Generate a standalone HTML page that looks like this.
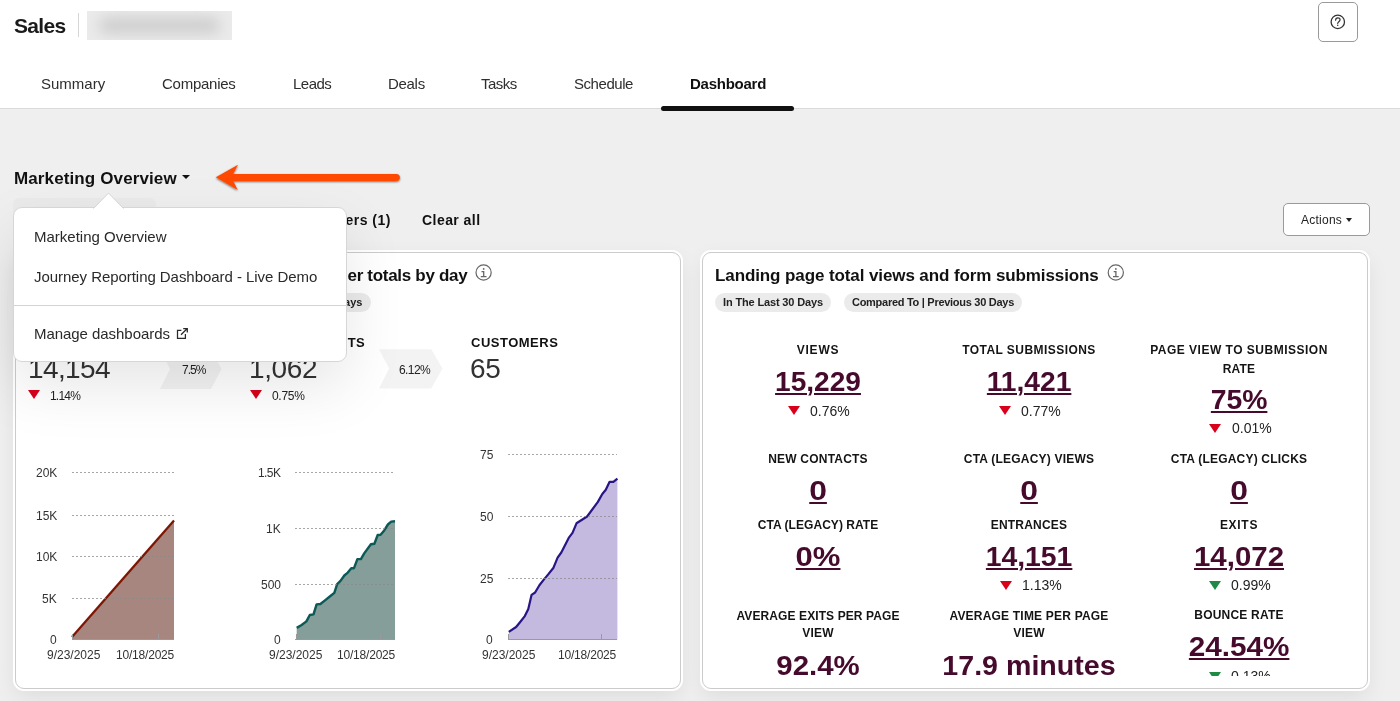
<!DOCTYPE html>
<html><head><meta charset="utf-8">
<style>
html,body{margin:0;padding:0;}
body{width:1400px;height:701px;overflow:hidden;position:relative;background:#efefef;font-family:"Liberation Sans",sans-serif;color:#222;}
.a{position:absolute;}
.t{position:absolute;line-height:1;white-space:nowrap;will-change:transform;}
.b{font-weight:700;}
.c{position:absolute;line-height:1;white-space:nowrap;transform:translateX(-50%);will-change:transform;}
#hdr{position:absolute;left:0;top:0;width:1400px;height:108px;background:#fff;border-bottom:1px solid #dadada;}
.tab{font-size:15px;top:76.1px;color:#2e2e2e;}
.card{position:absolute;top:252px;height:435px;background:#fff;border:1px solid #cbcbcb;border-radius:9px;box-shadow:0 0 0 2px #fff,0 8px 22px rgba(0,0,0,0.08);overflow:hidden;}
.pill{position:absolute;height:19px;border-radius:10px;background:#ebebeb;}
.pt{font-size:11px;font-weight:700;color:#222;}
.lbl{font-size:12px;font-weight:700;color:#141414;letter-spacing:0.2px;}
.val{font-size:27px;font-weight:700;color:#450a2c;text-decoration:underline;text-decoration-thickness:2.4px;text-underline-offset:2px;}
.dl{font-size:14px;color:#222;}
.tri{position:absolute;width:0;height:0;margin-left:-0.3px;margin-top:-0.5px;border-left:6.9px solid transparent;border-right:6.9px solid transparent;border-top:9.9px solid #d9001b;}
.trig{border-top-color:#1e8a43;}
.ax{font-size:12px;color:#333;}
</style></head><body>

<!-- HEADER -->
<div id="hdr"></div>
<div class="t b" style="left:13.5px;top:15.15px;font-size:21px;color:#1a1a1a;letter-spacing:-0.7px;">Sales</div>
<div class="a" style="left:78px;top:13px;width:1px;height:24px;background:#d6d6d6;"></div>
<div class="a" style="left:87px;top:11px;width:145px;height:29px;background:#ebebeb;overflow:hidden;">
  <div class="a" style="left:12px;top:6px;width:121px;height:17px;background:#cecece;filter:blur(7px);border-radius:8px;"></div>
</div>
<div class="a" style="left:1318px;top:2px;width:38px;height:38px;border:1px solid #9a9a9a;border-radius:5px;background:#fff;"></div>
<svg class="a" style="left:1328px;top:12px" width="20" height="20" viewBox="0 0 20 20">
  <circle cx="9.8" cy="9.9" r="6.7" fill="none" stroke="#333" stroke-width="1.3"/>
  <path d="M7.6 8.2 C7.6 6.6 8.7 5.8 9.9 5.8 C11.1 5.8 12.1 6.6 12.1 7.8 C12.1 9.2 10.1 9.6 9.7 11.4" fill="none" stroke="#333" stroke-width="1.2" stroke-linecap="round"/>
  <circle cx="9.7" cy="13.3" r="0.75" fill="#333"/>
</svg>

<div class="t tab" style="left:41px;">Summary</div>
<div class="t tab" style="left:161.6px;letter-spacing:-0.25px;">Companies</div>
<div class="t tab" style="left:292.5px;letter-spacing:-0.5px;">Leads</div>
<div class="t tab" style="left:388px;letter-spacing:-0.3px;">Deals</div>
<div class="t tab" style="left:481px;letter-spacing:-0.5px;">Tasks</div>
<div class="t tab" style="left:574px;letter-spacing:-0.45px;">Schedule</div>
<div class="t tab b" style="left:690px;letter-spacing:-0.25px;color:#111;">Dashboard</div>
<div class="a" style="left:661px;top:106px;width:133px;height:5px;border-radius:3px;background:#111;"></div>

<!-- TOOLBAR -->
<div class="t b" style="left:14px;top:169.6px;font-size:17px;letter-spacing:0.12px;color:#111;">Marketing Overview</div>
<div class="a" style="left:181.5px;top:174.7px;width:0;height:0;border-left:4.8px solid transparent;border-right:4.8px solid transparent;border-top:4.8px solid #111;"></div>

<!-- orange arrow -->
<svg class="a" style="left:205px;top:155px" width="210" height="45" viewBox="0 0 210 45">
  <defs><filter id="sh" x="-10%" y="-50%" width="120%" height="200%"><feGaussianBlur in="SourceAlpha" stdDeviation="0.9"/><feOffset dx="0.4" dy="1.3"/><feComponentTransfer><feFuncA type="linear" slope="0.55"/></feComponentTransfer><feMerge><feMergeNode/><feMergeNode in="SourceGraphic"/></feMerge></filter></defs>
  <g filter="url(#sh)">
    <path d="M10.8 22.3 L33 9.8 L28.2 18.9 L191.3 18.9 A3.6 3.6 0 0 1 191.3 26.1 L28.2 26.1 L32.7 35.1 Z" fill="#ff4a00"/>
  </g>
</svg>

<!-- filter bar -->
<div class="a" style="left:13px;top:198px;width:143px;height:40px;background:#eaeaea;border-radius:6px;"></div>
<div class="t b" style="right:1009px;top:212.7px;font-size:14px;letter-spacing:0.5px;color:#111;">Advanced filters (1)</div>
<div class="t b" style="left:422.3px;top:212.7px;font-size:14px;letter-spacing:0.45px;color:#111;">Clear all</div>
<div class="a" style="left:1283px;top:203px;width:85px;height:31px;border:1px solid #9a9a9a;border-radius:5px;background:#fff;"></div>
<div class="t" style="left:1300.5px;top:213.6px;font-size:12px;letter-spacing:0.25px;color:#222;">Actions</div>
<div class="a" style="left:1346px;top:218px;width:0;height:0;border-left:3.25px solid transparent;border-right:3.25px solid transparent;border-top:4px solid #222;"></div>

<!-- CARD 1 -->
<div class="card" style="left:15px;width:664px;"></div>
<div class="t b" style="right:933px;top:266.55px;font-size:17px;letter-spacing:-0.3px;color:#111;">Lifecycle stage customer totals by day</div>
<svg class="a" style="left:474px;top:263px" width="20" height="20" viewBox="0 0 20 20">
  <circle cx="9.6" cy="9.5" r="7.6" fill="none" stroke="#666" stroke-width="1.2"/>
  <rect x="8.9" y="5.1" width="1.5" height="1.7" fill="#666"/>
  <path d="M7.5 8.6 H9.7 V13.4 M6.8 13.6 H12.5" fill="none" stroke="#666" stroke-width="1.3"/>
</svg>
<div class="pill" style="left:200px;top:292.5px;width:171px;"></div>
<div class="t pt" style="right:1038px;top:296.95px;">Compared To | Previous 30 Days</div>

<div class="t b" style="right:1035px;top:335.95px;font-size:13px;letter-spacing:0.5px;color:#111;">CONTACTS</div>
<div class="t b" style="left:471.4px;top:335.95px;font-size:13px;letter-spacing:0.5px;color:#111;">CUSTOMERS</div>
<div class="t" style="left:28px;top:355.2px;font-size:28px;letter-spacing:-0.6px;color:#333;">14,154</div>
<div class="t" style="left:248.5px;top:355.2px;font-size:28px;letter-spacing:-0.4px;color:#333;">1,062</div>
<div class="t" style="left:470px;top:354.8px;font-size:28px;letter-spacing:-0.4px;color:#333;">65</div>
<svg class="a" style="left:160px;top:349px" width="62" height="40"><polygon points="0,0 51,0 61.5,20 51,40 0,40 10,20" fill="#f3f3f3"/></svg>
<svg class="a" style="left:379px;top:349px" width="64" height="40"><polygon points="0,0.3 52.2,0.3 63.5,19.6 52.2,39.6 0,39.6 10.2,19.6" fill="#f3f3f3"/></svg>
<div class="t" style="left:181.8px;top:364px;font-size:12px;letter-spacing:-1px;color:#222;">7.5%</div>
<div class="t" style="left:399px;top:364px;font-size:12px;letter-spacing:-0.6px;color:#222;">6.12%</div>
<div class="tri" style="left:28.6px;top:390.7px;"></div>
<div class="t" style="left:50.3px;top:389.8px;font-size:12px;letter-spacing:-0.8px;color:#222;">1.14%</div>
<div class="tri" style="left:249.8px;top:390.7px;"></div>
<div class="t" style="left:272px;top:389.8px;font-size:12px;letter-spacing:-0.3px;color:#222;">0.75%</div>

<!-- charts -->
<svg class="a" style="left:0;top:440px" width="680" height="240" viewBox="0 440 680 240">
  <!-- chart1 -->
  <path d="M72 637 L174 520.5 L174 639.5 L72 639.5 Z" fill="#a6867f"/>
  <path d="M72 637 L174 520.5" stroke="#7e1604" stroke-width="2.3" fill="none"/>
  <!-- chart2 -->
  <path d="M296.7,627.9 L301.6,625 L306.4,621.4 L309.8,615 L313.5,614.4 L316.6,604.4 L320.4,604 L324.7,600.6 L330.1,596.3 L334.3,592.9 L337.2,584.2 L340.5,580.9 L344.3,575.5 L347.8,572.6 L351.3,568.2 L354,568.2 L357.4,559.1 L360.9,559.1 L364.2,553.4 L370.9,544.3 L374.4,543.7 L377.7,535 L380.6,534.7 L384.4,530.2 L387.9,524.5 L391.2,521.6 L395,521.2 L395 639.5 L296.7 639.5 Z" fill="#869e9a"/>
  <path d="M296.7,627.9 L301.6,625 L306.4,621.4 L309.8,615 L313.5,614.4 L316.6,604.4 L320.4,604 L324.7,600.6 L330.1,596.3 L334.3,592.9 L337.2,584.2 L340.5,580.9 L344.3,575.5 L347.8,572.6 L351.3,568.2 L354,568.2 L357.4,559.1 L360.9,559.1 L364.2,553.4 L370.9,544.3 L374.4,543.7 L377.7,535 L380.6,534.7 L384.4,530.2 L387.9,524.5 L391.2,521.6 L395,521.2" stroke="#0b5a57" stroke-width="2.4" fill="none" stroke-linejoin="round"/>
  <!-- chart3 -->
  <path d="M508.8,631.9 L516.1,627 L520.4,621.7 L524.8,616.1 L528.3,608.9 L531.6,594.8 L535.1,592.5 L539.4,585.2 L543.8,579.6 L548.2,574.4 L553.5,567.7 L557.6,557.7 L561.3,552.5 L568.7,537.9 L572.5,532.9 L576.5,523.3 L587.1,516.5 L597.9,501.9 L602.3,494 L605.8,489.7 L609.6,481.8 L613.4,481.8 L617.4,478.6 L617.4 639.5 L508.8 639.5 Z" fill="#c4badf"/>
  <path d="M508.8,631.9 L516.1,627 L520.4,621.7 L524.8,616.1 L528.3,608.9 L531.6,594.8 L535.1,592.5 L539.4,585.2 L543.8,579.6 L548.2,574.4 L553.5,567.7 L557.6,557.7 L561.3,552.5 L568.7,537.9 L572.5,532.9 L576.5,523.3 L587.1,516.5 L597.9,501.9 L602.3,494 L605.8,489.7 L609.6,481.8 L613.4,481.8 L617.4,478.6" stroke="#2a1585" stroke-width="2.2" fill="none" stroke-linejoin="round"/>
  <g stroke="#8a8a8a" stroke-opacity="0.75" stroke-width="1" stroke-dasharray="2,2" fill="none">
    <line x1="72" y1="472.5" x2="174" y2="472.5"/><line x1="72" y1="515.5" x2="174" y2="515.5"/><line x1="72" y1="556.5" x2="174" y2="556.5"/><line x1="72" y1="598.5" x2="174" y2="598.5"/>
    <line x1="295" y1="472.5" x2="395" y2="472.5"/><line x1="295" y1="528.5" x2="395" y2="528.5"/><line x1="295" y1="584.5" x2="395" y2="584.5"/>
    <line x1="508" y1="454.5" x2="617" y2="454.5"/><line x1="508" y1="516.5" x2="617" y2="516.5"/><line x1="508" y1="578.5" x2="617" y2="578.5"/>
  </g>

  <!-- baselines & ticks -->
  <g stroke="#9a9a9a" stroke-width="1">
    <line x1="72" y1="639.5" x2="174" y2="639.5"/><line x1="72.5" y1="634" x2="72.5" y2="640"/><line x1="158.5" y1="634" x2="158.5" y2="640"/>
    <line x1="295" y1="639.5" x2="395" y2="639.5"/><line x1="296.5" y1="634" x2="296.5" y2="640"/><line x1="380.5" y1="634" x2="380.5" y2="640"/>
    <line x1="508" y1="639.5" x2="617" y2="639.5"/><line x1="508.5" y1="634" x2="508.5" y2="640"/><line x1="601.5" y1="634" x2="601.5" y2="640"/>
  </g>
</svg>
<div class="t ax" style="right:1343px;top:466.8px;">20K</div>
<div class="t ax" style="right:1343px;top:509.8px;">15K</div>
<div class="t ax" style="right:1343px;top:550.8px;">10K</div>
<div class="t ax" style="right:1343px;top:592.8px;">5K</div>
<div class="t ax" style="right:1343px;top:633.8px;">0</div>
<div class="t ax" style="left:46.9px;top:648.6px;">9/23/2025</div>
<div class="t ax" style="left:115.8px;top:648.6px;letter-spacing:-0.2px;">10/18/2025</div>

<div class="t ax" style="right:1120px;top:466.8px;letter-spacing:-0.6px;">1.5K</div>
<div class="t ax" style="right:1119px;top:522.8px;">1K</div>
<div class="t ax" style="right:1119px;top:578.8px;">500</div>
<div class="t ax" style="right:1119px;top:633.8px;">0</div>
<div class="t ax" style="left:269px;top:648.6px;">9/23/2025</div>
<div class="t ax" style="left:337px;top:648.6px;letter-spacing:-0.2px;">10/18/2025</div>

<div class="t ax" style="right:907px;top:448.8px;">75</div>
<div class="t ax" style="right:907px;top:510.8px;">50</div>
<div class="t ax" style="right:907px;top:572.8px;">25</div>
<div class="t ax" style="right:907px;top:633.8px;">0</div>
<div class="t ax" style="left:482px;top:648.6px;">9/23/2025</div>
<div class="t ax" style="left:558px;top:648.6px;letter-spacing:-0.2px;">10/18/2025</div>

<!-- CARD 2 -->
<div class="card" style="left:702px;width:664px;"></div>
<div class="t b" style="left:715.4px;top:266.55px;font-size:17px;letter-spacing:-0.1px;color:#111;">Landing page total views and form submissions</div>
<svg class="a" style="left:1106px;top:263px" width="20" height="20" viewBox="0 0 20 20">
  <circle cx="9.8" cy="9.5" r="7.6" fill="none" stroke="#666" stroke-width="1.2"/>
  <rect x="9.1" y="5.1" width="1.5" height="1.7" fill="#666"/>
  <path d="M7.7 8.6 H9.9 V13.4 M7.0 13.6 H12.7" fill="none" stroke="#666" stroke-width="1.3"/>
</svg>
<div class="pill" style="left:714.5px;top:292.8px;width:116.3px;"></div>
<div class="t pt" style="left:723px;top:296.95px;letter-spacing:-0.15px;">In The Last 30 Days</div>
<div class="pill" style="left:843.6px;top:292.8px;width:178.9px;"></div>
<div class="t pt" style="left:852px;top:296.95px;letter-spacing:-0.28px;">Compared To | Previous 30 Days</div>

<div id="kpis" class="a" style="left:703px;top:252px;width:664px;height:423.5px;overflow:hidden;">
<div class="a" style="left:-703px;top:-252px;width:1400px;height:701px;">
  <!-- row 1 -->
  <div class="c lbl" style="left:818px;top:344.4px;letter-spacing:0.8px;">VIEWS</div>
  <div class="c val" style="left:818px;top:368.85px;transform:translateX(-50%) scaleX(1.04);">15,229</div>
  <div class="tri" style="left:788px;top:406.6px;"></div><div class="t dl" style="left:809.8px;top:403.50px;">0.76%</div>

  <div class="c lbl" style="left:1028.6px;top:344.4px;letter-spacing:0.45px;">TOTAL SUBMISSIONS</div>
  <div class="c val" style="left:1028.6px;top:368.85px;transform:translateX(-50%) scaleX(1.045);">11,421</div>
  <div class="tri" style="left:999px;top:406.6px;"></div><div class="t dl" style="left:1020.5px;top:403.50px;">0.77%</div>

  <div class="c lbl" style="left:1239.3px;top:344.4px;letter-spacing:0.5px;">PAGE VIEW TO SUBMISSION</div>
  <div class="c lbl" style="left:1239.3px;top:362.5px;">RATE</div>
  <div class="c val" style="left:1239.3px;top:386.95px;transform:translateX(-50%) scaleX(1.05);">75%</div>
  <div class="tri" style="left:1209.2px;top:424.5px;"></div><div class="t dl" style="left:1231.5px;top:421.40px;">0.01%</div>

  <!-- row 2 -->
  <div class="c lbl" style="left:818px;top:452.9px;">NEW CONTACTS</div>
  <div class="c val" style="left:818px;top:478.45px;transform:translateX(-50%) scaleX(1.18);">0</div>
  <div class="c lbl" style="left:1028.6px;top:452.9px;">CTA (LEGACY) VIEWS</div>
  <div class="c val" style="left:1028.6px;top:478.45px;transform:translateX(-50%) scaleX(1.18);">0</div>
  <div class="c lbl" style="left:1239.3px;top:452.9px;">CTA (LEGACY) CLICKS</div>
  <div class="c val" style="left:1239.3px;top:478.45px;transform:translateX(-50%) scaleX(1.18);">0</div>

  <!-- row 3 -->
  <div class="c lbl" style="left:818px;top:519px;letter-spacing:0.05px;">CTA (LEGACY) RATE</div>
  <div class="c val" style="left:818px;top:544.05px;transform:translateX(-50%) scaleX(1.15);">0%</div>
  <div class="c lbl" style="left:1028.6px;top:519px;">ENTRANCES</div>
  <div class="c val" style="left:1028.6px;top:544.05px;transform:translateX(-50%) scaleX(1.05);">14,151</div>
  <div class="tri" style="left:1000.5px;top:581px;"></div><div class="t dl" style="left:1022.3px;top:577.50px;">1.13%</div>
  <div class="c lbl" style="left:1239.3px;top:519px;letter-spacing:0.7px;">EXITS</div>
  <div class="c val" style="left:1239.3px;top:544.05px;transform:translateX(-50%) scaleX(1.09);">14,072</div>
  <div class="tri trig" style="left:1208.8px;top:581px;"></div><div class="t dl" style="left:1231px;top:577.50px;">0.99%</div>

  <!-- row 4 -->
  <div class="c lbl" style="left:818px;top:609.7px;letter-spacing:0.1px;">AVERAGE EXITS PER PAGE</div>
  <div class="c lbl" style="left:818px;top:627.3px;">VIEW</div>
  <div class="c val" style="left:818px;top:652.65px;transform:translateX(-50%) scaleX(1.09);">92.4%</div>
  <div class="c lbl" style="left:1028.6px;top:609.7px;">AVERAGE TIME PER PAGE</div>
  <div class="c lbl" style="left:1028.6px;top:627.3px;">VIEW</div>
  <div class="c val" style="left:1028.6px;top:652.65px;transform:translateX(-50%) scaleX(1.06);">17.9 minutes</div>
  <div class="c lbl" style="left:1239.3px;top:609.4px;">BOUNCE RATE</div>
  <div class="c val" style="left:1239.3px;top:634.25px;transform:translateX(-50%) scaleX(1.1);">24.54%</div>
  <div class="tri trig" style="left:1209px;top:672px;"></div><div class="t dl" style="left:1231px;top:668.90px;">0.13%</div>
</div>
</div>

<!-- POPOVER -->
<div class="a" style="left:13px;top:207px;width:332px;height:153px;background:#fff;border:1px solid #d6d6d6;border-radius:9px;box-shadow:0 24px 60px rgba(0,0,0,0.10);"></div>
<svg class="a" style="left:93px;top:192px" width="32" height="18" viewBox="0 0 32 18">
  <path d="M0 17 L15.5 1 L31 17" fill="#fff" stroke="#d3d3d3" stroke-width="1"/>
  <rect x="0" y="16.5" width="32" height="2" fill="#fff"/>
</svg>
<div class="t" style="left:33.7px;top:229.45px;font-size:15px;color:#2a2a2a;">Marketing Overview</div>
<div class="t" style="left:33.7px;top:269.25px;font-size:15px;letter-spacing:-0.05px;color:#2a2a2a;">Journey Reporting Dashboard - Live Demo</div>
<div class="a" style="left:14px;top:305px;width:332px;height:1px;background:#d3d3d3;"></div>
<div class="t" style="left:33.7px;top:326.25px;font-size:15px;letter-spacing:-0.05px;color:#2a2a2a;">Manage dashboards</div>
<svg class="a" style="left:175px;top:326px" width="14" height="14" viewBox="0 0 14 14">
  <path d="M6.4 4.4 H2.5 V12.4 H10.4 V8.1" fill="none" stroke="#2a2a2a" stroke-width="1.25"/>
  <path d="M8.2 2.5 H12.3 V6.6 M12.3 2.5 L6 8.8" fill="none" stroke="#2a2a2a" stroke-width="1.25"/>
</svg>

</body></html>
